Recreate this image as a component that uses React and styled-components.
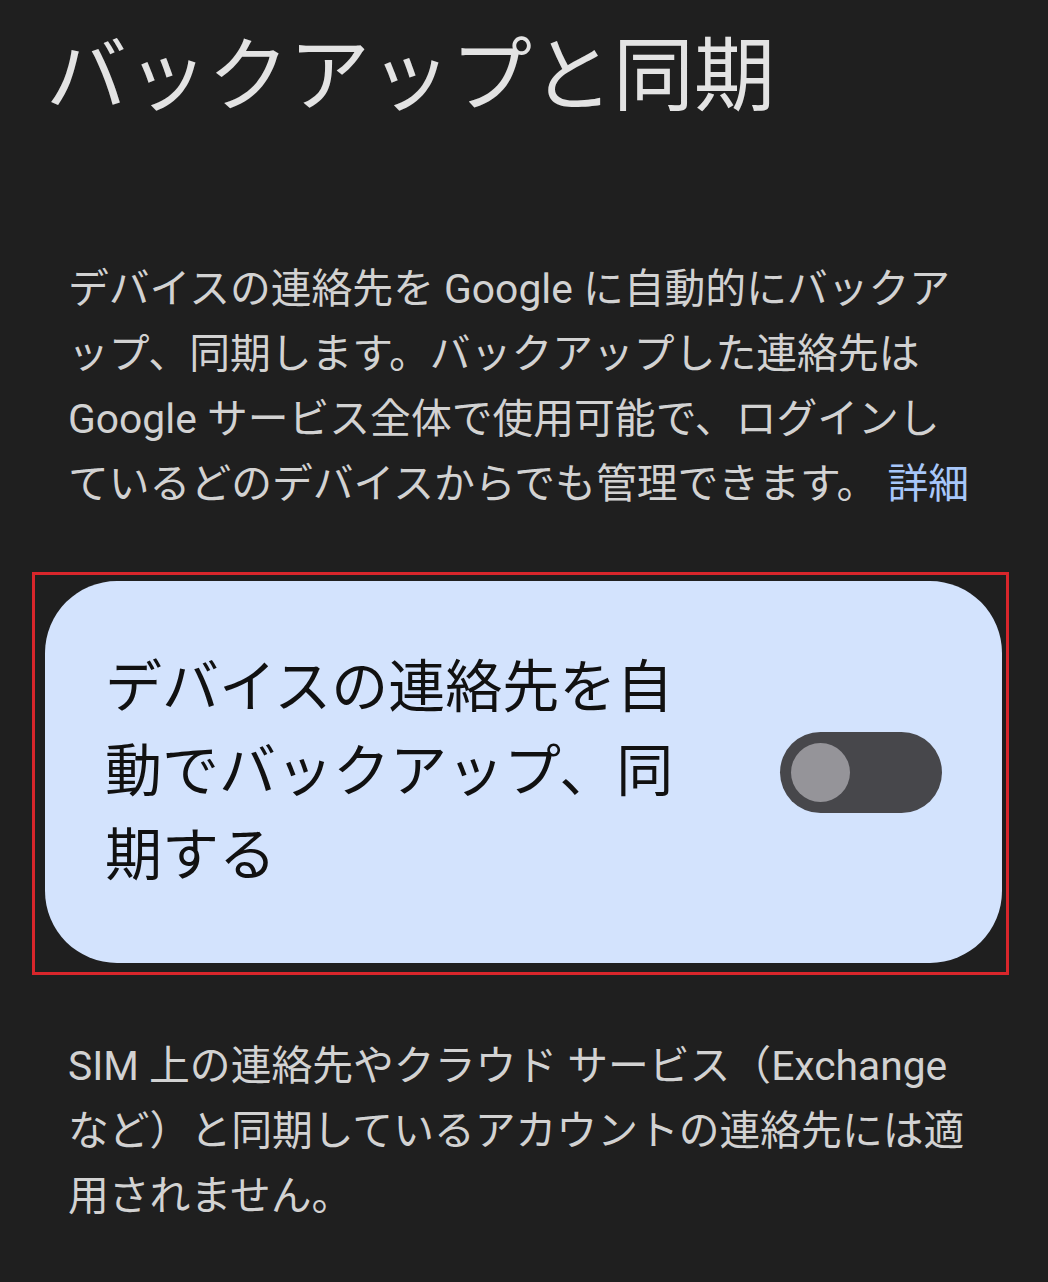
import React, { useState } from "react";
import styled, { createGlobalStyle } from "styled-components";

const GlobalStyle = createGlobalStyle`
  html, body {
    margin: 0;
    padding: 0;
    background: #1f1f1f;
  }
  body {
    font-family: Roboto, "Noto Sans CJK JP", sans-serif;
    -webkit-font-smoothing: antialiased;
  }
`;

const BackupSync = () => {
  const [enabled, setEnabled] = useState(false);

  return (
    <Page>
      <GlobalStyle />
      <Title>バックアップと同期</Title>

      <Description>
        デバイスの連絡先を Google に自動的にバックアップ、同期します。バックアップした連絡先は
        Google サービス全体で使用可能で、ログインしているどのデバイスからでも管理できます。{" "}
        <LearnMore href="#">詳細</LearnMore>
      </Description>

      <Highlight>
        <SettingCard>
          <SettingLabel>デバイスの連絡先を自動でバックアップ、同期する</SettingLabel>
          <Switch
            role="switch"
            aria-checked={enabled}
            $on={enabled}
            onClick={() => setEnabled(!enabled)}
          >
            <Knob $on={enabled} />
          </Switch>
        </SettingCard>
      </Highlight>

      <Note>
        SIM 上の連絡先やクラウド サービス（Exchange
        など）と同期しているアカウントの連絡先には適用されません。
      </Note>
    </Page>
  );
};

// Styled Components
const Page = styled.div`
  width: 1048px;
  min-height: 1282px;
  box-sizing: border-box;
  padding-top: 29px;
  background: #1f1f1f;
`;

const Title = styled.h1`
  margin: 0 0 132px 46px;
  font-size: 81px;
  line-height: 96px;
  font-weight: 400;
  color: #e3e3e3;
`;

const Description = styled.p`
  margin: 0 0 55px 68px;
  width: 903px;
  font-size: 40.8px;
  line-height: 65px;
  color: #d2d2d2;
`;

const LearnMore = styled.a`
  color: #a8c7fa;
  text-decoration: none;
`;

const Highlight = styled.div`
  margin-left: 32px;
  width: 977px;
  box-sizing: border-box;
  border: 3px solid #d8262b;
  padding: 6px 4px 9px 10px;
`;

const SettingCard = styled.div`
  display: flex;
  align-items: center;
  justify-content: space-between;
  padding: 65px 60px;
  border-radius: 72px;
  background: #d3e3fd;
`;

const SettingLabel = styled.div`
  width: 600px;
  font-size: 57px;
  line-height: 84px;
  color: #111111;
`;

const Switch = styled.button`
  display: flex;
  align-items: center;
  justify-content: ${(p) => (p.$on ? "flex-end" : "flex-start")};
  width: 162px;
  height: 81px;
  padding: 0 11px;
  border: none;
  border-radius: 41px;
  background: ${(p) => (p.$on ? "#0b57d0" : "#47474b")};
  cursor: pointer;
`;

const Knob = styled.span`
  display: block;
  width: 59px;
  height: 59px;
  border-radius: 50%;
  background: ${(p) => (p.$on ? "#ffffff" : "#959499")};
`;

const Note = styled.p`
  margin: 59px 0 0 68px;
  width: 903px;
  font-size: 40.8px;
  line-height: 65px;
  color: #d2d2d2;
`;

export default BackupSync;
